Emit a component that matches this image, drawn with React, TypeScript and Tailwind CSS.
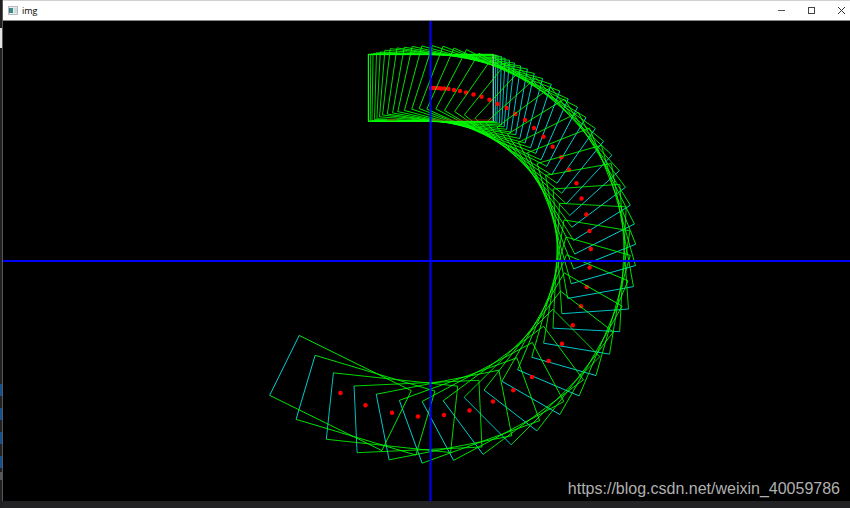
import { Fragment } from "react";

// Center and heading (degrees) of the vehicle at each step
const poses = [
  [431, 88, 0],
  [431, 88, 0],
  [433, 88, 0.4],
  [435, 88, 0.9],
  [438, 88, 1.7],
  [441, 88.5, 2.9],
  [444.5, 88.5, 4.6],
  [448.5, 89, 6.6],
  [454, 90, 8.3],
  [460, 91, 10.1],
  [466, 92.5, 12.5],
  [473.5, 94.5, 15.1],
  [481.5, 96.7, 18],
  [489.5, 99.8, 21],
  [497.5, 104, 24],
  [506.7, 108, 27.4],
  [515.3, 114, 31],
  [525, 120, 35],
  [534, 128, 38.8],
  [543.5, 136.7, 43.2],
  [552.7, 146.7, 48],
  [561.3, 157.2, 53.3],
  [569, 169.7, 58.2],
  [576.5, 183.2, 63.3],
  [581.6, 198.5, 68.3],
  [586.3, 214.5, 74.2],
  [589.5, 231, 79.8],
  [590.8, 249, 86],
  [589.6, 267.5, 93],
  [586.8, 287, 99.4],
  [581, 306.3, 105.9],
  [572.8, 325.3, 113],
  [562, 343.7, 119.9],
  [548.7, 361, 127.7],
  [532, 377, 135.2],
  [513.3, 390.3, 143.4],
  [493, 401.5, 151.9],
  [469.5, 410.5, 160.1],
  [444, 415, 168.9],
  [418, 416.5, 177.4],
  [392, 412.7, 186.1],
  [365.5, 405.2, 196.6],
  [340.5, 393, 206.2],
];

function TitleBar() {
  return (
    <header className="flex h-[21px] items-center border-t border-b border-t-[#d0d0d0] border-b-[#8a8a8a] bg-white pl-[5px]">
      <svg width="10" height="9" viewBox="0 0 10 9" aria-hidden="true">
        <rect x="0.5" y="0.5" width="9" height="8" fill="#e9edf0" stroke="#b5bcc4" />
        <rect x="1" y="2" width="4" height="5" fill="#3f8f80" />
        <rect x="1" y="2" width="1" height="5" fill="#4b6f9a" />
        <rect x="6" y="2" width="3" height="5" fill="#cfdcdf" />
      </svg>
      <h1 className="ml-1 flex-1 font-['Open_Sans',sans-serif] text-[9px] leading-3 text-black">img</h1>
      <div className="flex h-full gap-3">
        <button type="button" aria-label="Minimize" className="flex w-[18px] items-center justify-center">
          <svg width="7" height="7" viewBox="0 0 7 7">
            <path d="M0 3.5h7" stroke="#555" />
          </svg>
        </button>
        <button type="button" aria-label="Maximize" className="flex w-[18px] items-center justify-center">
          <svg width="7" height="7" viewBox="0 0 7 7">
            <rect x="0.5" y="0.5" width="6" height="6" fill="none" stroke="#444" />
          </svg>
        </button>
        <button type="button" aria-label="Close" className="flex w-[18px] items-center justify-center">
          <svg width="7" height="7" viewBox="0 0 7 7">
            <path d="M0 0l7 7M7 0l-7 7" stroke="#333" />
          </svg>
        </button>
      </div>
    </header>
  );
}

function Trajectory() {
  return (
    <svg viewBox="3 21 847 480" className="block w-full" role="img" aria-label="Vehicle trajectory">
      {poses.map(([x, y, angle], i) => (
        <Fragment key={i}>
          <g transform={`translate(${x} ${y}) rotate(${angle})`} fill="none" strokeWidth="0.8">
            <path d="M62.5 -33.4H-62.5V33.4H62.5" stroke="#00ff00" />
            <path d="M62.5 -33.4V33.4" stroke="#00e8ec" />
          </g>
          <circle cx={x} cy={y} r="2.2" fill="#ff0000" />
        </Fragment>
      ))}
      {/* Starting box */}
      <path d="M493 54V121" stroke="#d8a8a8" strokeWidth="0.8" />
      <path d="M368 54.3H493M368.3 54V121M368 121.2H430" stroke="#00ff00" fill="none" />
      <path d="M387 119.8H397M430 120H493" stroke="#a01400" strokeWidth="0.8" />
      {/* Axes */}
      <path d="M430.5 21V501M3 261H850" stroke="#0000ff" strokeWidth="2" />
    </svg>
  );
}

// Sliver of the window behind
function Backdrop() {
  return (
    <div className="flex w-[2px] flex-col bg-[#202022]">
      <div className="h-7" />
      <div className="h-5 bg-[#e4e4e0]" />
      <div className="flex-1" />
      <div className="flex flex-col gap-3 pb-1">
        <div className="h-3 bg-[#14508f]" />
        <div className="h-3 bg-[#14508f]" />
        <div className="h-3 bg-[#14508f]" />
        <div className="h-3 bg-[#14508f]" />
      </div>
      <div className="mb-7 h-2 bg-[#55565a]" />
    </div>
  );
}

export default function App() {
  return (
    <div className="flex min-h-screen bg-[#232325]">
      <Backdrop />
      <div className="min-w-0 flex-1">
        <main className="relative border-l border-[#58585a] bg-black">
          <TitleBar />
          <Trajectory />
          <p className="absolute right-[10px] bottom-0 font-['Liberation_Sans',sans-serif] text-base leading-6 text-[#b0b0b0]">
            https://blog.csdn.net/weixin_40059786
          </p>
        </main>
      </div>
    </div>
  );
}
